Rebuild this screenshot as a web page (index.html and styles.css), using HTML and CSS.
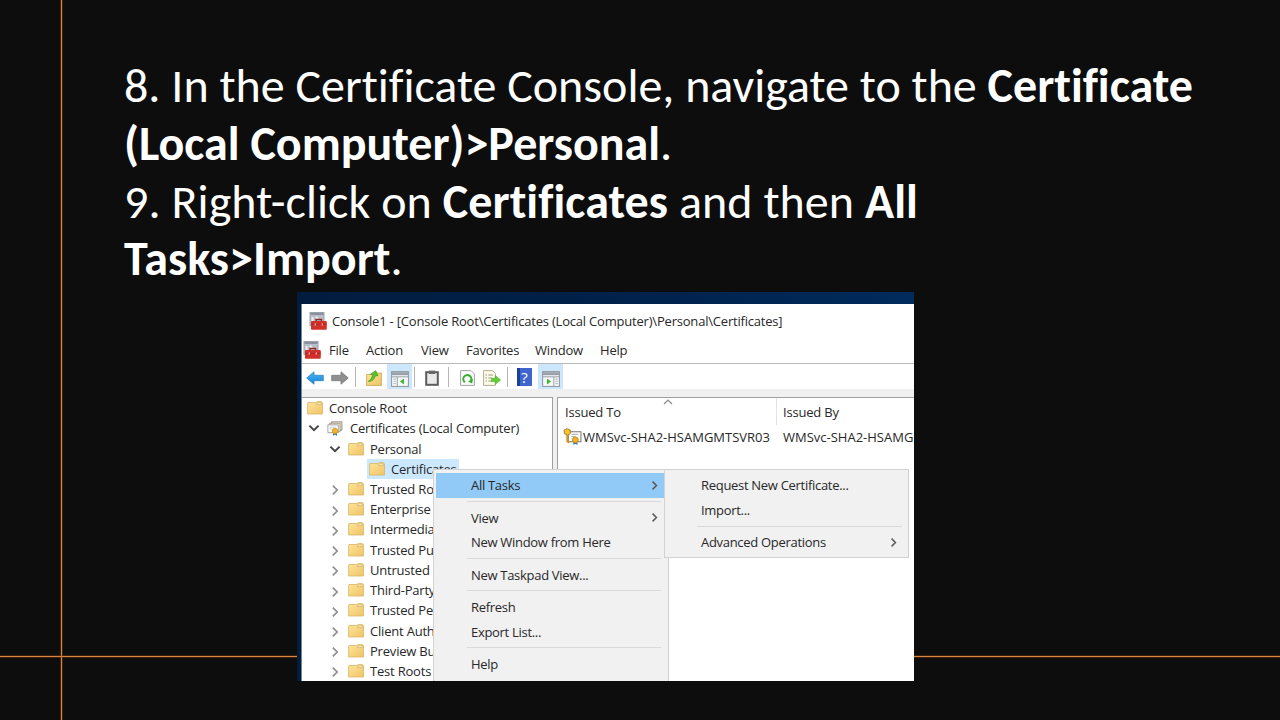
FILE: index.html
```
<!DOCTYPE html>
<html lang="en">
<head>
<meta charset="UTF-8">
<meta name="viewport" content="width=device-width, initial-scale=1.0">
<title>Import a certificate</title>
<link rel="stylesheet" href="styles.css">
</head>
<body>
<!-- shared icons -->
<svg class="sprite" width="0" height="0">
  <defs>
    <linearGradient id="gold" x1="0" y1="0" x2="1" y2="1">
      <stop offset="0" stop-color="#ffe49c"/><stop offset="1" stop-color="#efc465"/>
    </linearGradient>
    <linearGradient id="sky" x1="0" y1="0" x2="0" y2="1">
      <stop offset="0" stop-color="#4fb6f5"/><stop offset="1" stop-color="#1583d6"/>
    </linearGradient>
  </defs>
  <symbol id="folder" viewBox="0 0 16 14">
    <path d="M1 1.5H9L10 .6H14.5L15.5 2V13H.6V2z" fill="url(#gold)" stroke="#d9b565" stroke-width=".8"/>
    <path d="M9.3 3.6L10.6 1.8H14.2V3.6z" fill="#fff3cc" stroke="#c9a85c" stroke-width=".6"/>
  </symbol>
  <symbol id="toolbox" viewBox="0 0 18 18">
    <rect x="1" y=".5" width="14" height="13" fill="#b9bfc9" stroke="#9aa1ac"/>
    <path d="M1.5 2H14.5" stroke="#8a92a0" stroke-width="2"/>
    <path d="M3.5 5V9M7 4.5L9 7.5" stroke="#eceef1" stroke-width="2"/>
    <path d="M7 9.5V7.5H12.5V9.5" fill="none" stroke="#8e2a25" stroke-width="1.4"/>
    <rect x="2" y="9" width="15.8" height="8.7" rx="1" fill="#d2302b"/>
    <path d="M2 12.3H17.8" stroke="#b32622"/>
    <path d="M6.3 11.5V13.5M13.3 11.5V13.5" stroke="#f0b3a8" stroke-width="1.4"/>
  </symbol>
  <symbol id="certs" viewBox="0 0 18 17">
    <path d="M5 1H16.8V10.5H5z" fill="#efe9d8" stroke="#8c8779"/>
    <path d="M3 2.6H14.8V12H3z" fill="#f7f3e8" stroke="#9a9488"/>
    <path d="M1 4.4H12.8V13.2H1z" fill="#fff" stroke="#9a9aa2"/>
    <path d="M3 7H10M3 9H6" stroke="#c4c4c4"/>
    <path d="M7.2 12L6.6 16.8L9 15.3L11.4 16.8L10.8 12z" fill="#2f78c4"/>
    <circle cx="9" cy="11.4" r="3.1" fill="#f0b429" stroke="#c98a12" stroke-width=".7"/>
  </symbol>
  <symbol id="cert" viewBox="0 0 18 16">
    <path d="M5 3.5H17V13H5z" fill="#fff" stroke="#777"/>
    <path d="M8 6H14.5M8 8H12" stroke="#bbb"/>
    <path d="M1 2L3.5 .6L6.8 1.8L7 5L4.6 6.8L1.4 5.4z" fill="#f6c236" stroke="#a77a10" stroke-width=".9"/>
    <path d="M4 6.5V12.5L6 14" fill="none" stroke="#d39a1a" stroke-width="1.8"/>
    <path d="M10.2 11.5L9.6 16L11.7 14.8L13.8 16L13.2 11.5z" fill="#2f78c4"/>
    <circle cx="11.7" cy="11.2" r="2.8" fill="#f0b429" stroke="#b27c0c" stroke-width=".7"/>
  </symbol>
  <symbol id="right" viewBox="0 0 8 12">
    <path d="M1.8 1.6L6.2 6L1.8 10.4" fill="none" stroke="currentColor" stroke-width="1.7"/>
  </symbol>
  <symbol id="down" viewBox="0 0 12 8">
    <path d="M1.4 1.6L6 6.2L10.6 1.6" fill="none" stroke="currentColor" stroke-width="2"/>
  </symbol>
</svg>

<div class="slide">
  <div class="guide guide-v"></div>
  <div class="guide guide-h"></div>

  <div class="steps">
    <p>8. In the Certificate Console, navigate to the <b>Certificate (Local Computer)&gt;Personal</b>.</p>
    <p>9. Right-click on <b>Certificates</b> and then <b>All Tasks&gt;Import</b>.</p>
  </div>

  <div class="desktop">
    <div class="window">
      <div class="titlebar">
        <svg class="app-icon"><use href="#toolbox"/></svg>
        <span>Console1 - [Console Root\Certificates (Local Computer)\Personal\Certificates]</span>
      </div>

      <div class="menubar">
        <svg class="app-icon"><use href="#toolbox"/></svg>
        <span class="m-file">File</span>
        <span class="m-action">Action</span>
        <span class="m-view">View</span>
        <span class="m-fav">Favorites</span>
        <span class="m-window">Window</span>
        <span>Help</span>
      </div>

      <div class="toolbar">
        <svg class="tool arrow" viewBox="0 0 18 14"><path d="M.7 7L8 .8V4.3H17.3V9.7H8V13.2z" fill="url(#sky)" stroke="#2b86c5" stroke-width=".8"/></svg>
        <svg class="tool arrow next" viewBox="0 0 18 14"><path d="M17.3 7L10 .8V4.3H.7V9.7H10V13.2z" fill="#8f8f8f" stroke="#777" stroke-width=".8"/></svg>
        <i class="divider d1"></i>
        <svg class="tool up" viewBox="0 0 16 16"><path d="M.6 4.5H7L8.3 3H15.4V15.4H.6z" fill="url(#gold)" stroke="#c9a14c" stroke-width=".8"/><path d="M2 11.5C5 10 6 7.5 6.6 4.8L4.4 4.2L9.8 .6L12 6L9.6 5.4C8.8 8.8 6 11.8 2 11.5z" fill="#58c32c" stroke="#3b9a1c" stroke-width=".6"/></svg>
        <span class="pressed">
          <svg class="pane-icon" viewBox="0 0 18 16"><rect x=".6" y=".6" width="16.8" height="14.8" fill="#f7f8f9" stroke="#8d959e"/><path d="M1 2.7H17" stroke="#98a0a9" stroke-width="3"/><path d="M1 5.8H17M6.3 6V15" stroke="#98a0a9"/><path d="M2.3 8H5M2.3 10.3H5M2.3 12.6H5" stroke="#b0b7bf"/><path d="M13 7.5V13.5L9 10.5z" fill="#3fb72c"/></svg>
        </span>
        <i class="divider d2"></i>
        <svg class="tool clip" viewBox="0 0 14 16"><rect x="1.2" y="2.2" width="11.6" height="12.6" fill="#e9e9e9" stroke="#5d5d5d" stroke-width="2"/><path d="M4 .6H10V4H4z" fill="#666"/></svg>
        <i class="divider d3"></i>
        <svg class="tool refresh" viewBox="0 0 15 16"><path d="M.6.6H11L14.4 4V15.4H.6z" fill="#fafafa" stroke="#a5a5a5"/><path d="M4.8 12.2A4 4 0 1 1 10.8 11" fill="none" stroke="#35b02c" stroke-width="2"/><path d="M13 8.8L12.2 13.4L8 11.4z" fill="#35b02c"/></svg>
        <svg class="tool export" viewBox="0 0 18 16"><path d="M.6.6H9.5L12.4 3.5V15.4H.6z" fill="#fffbe9" stroke="#b5ad93"/><path d="M2.5 5H4M2.5 8H4M2.5 11H4M5.3 5H10M5.3 8H9M5.3 11H9" stroke="#9a9687"/><path d="M8.5 8.2H12.4V5.5L17.6 10L12.4 14.3V11.6H8.5z" fill="#5fcf35" stroke="#43a822" stroke-width=".5"/></svg>
        <i class="divider d4"></i>
        <span class="help">?</span>
        <span class="pressed last">
          <svg class="pane-icon" viewBox="0 0 18 16"><rect x=".6" y=".6" width="16.8" height="14.8" fill="#f7f8f9" stroke="#8d959e"/><path d="M1 2.7H17" stroke="#98a0a9" stroke-width="3"/><path d="M1 5.8H17M11.8 6V15" stroke="#98a0a9"/><path d="M13.3 8H16M13.3 10.3H16M13.3 12.6H16" stroke="#b0b7bf"/><path d="M5 7.5V13.5L9 10.5z" fill="#3fb72c"/></svg>
        </span>
      </div>

      <div class="panes">
        <div class="tree">
          <div class="node root"><svg class="ico"><use href="#folder"/></svg><span>Console Root</span></div>
          <div class="node l1"><svg class="down"><use href="#down"/></svg><svg class="ico big"><use href="#certs"/></svg><span>Certificates (Local Computer)</span></div>
          <div class="node l2"><svg class="down"><use href="#down"/></svg><svg class="ico"><use href="#folder"/></svg><span>Personal</span></div>
          <div class="node l3"><div class="selected"><svg class="ico"><use href="#folder"/></svg><span>Certificates</span></div></div>
          <div class="node l2"><svg class="right"><use href="#right"/></svg><svg class="ico"><use href="#folder"/></svg><span>Trusted Ro</span></div>
          <div class="node l2"><svg class="right"><use href="#right"/></svg><svg class="ico"><use href="#folder"/></svg><span>Enterprise T</span></div>
          <div class="node l2"><svg class="right"><use href="#right"/></svg><svg class="ico"><use href="#folder"/></svg><span>Intermedia</span></div>
          <div class="node l2"><svg class="right"><use href="#right"/></svg><svg class="ico"><use href="#folder"/></svg><span>Trusted Pu</span></div>
          <div class="node l2"><svg class="right"><use href="#right"/></svg><svg class="ico"><use href="#folder"/></svg><span>Untrusted C</span></div>
          <div class="node l2"><svg class="right"><use href="#right"/></svg><svg class="ico"><use href="#folder"/></svg><span>Third-Party</span></div>
          <div class="node l2"><svg class="right"><use href="#right"/></svg><svg class="ico"><use href="#folder"/></svg><span>Trusted Pe</span></div>
          <div class="node l2"><svg class="right"><use href="#right"/></svg><svg class="ico"><use href="#folder"/></svg><span>Client Auth</span></div>
          <div class="node l2"><svg class="right"><use href="#right"/></svg><svg class="ico"><use href="#folder"/></svg><span>Preview Bu</span></div>
          <div class="node l2"><svg class="right"><use href="#right"/></svg><svg class="ico"><use href="#folder"/></svg><span>Test Roots</span></div>
        </div>

        <div class="list">
          <div class="list-head">
            <div class="col-to">Issued To<svg class="sort" viewBox="0 0 10 6"><path d="M1 5L5 1L9 5" fill="none" stroke="#8a8a8a" stroke-width="1.2"/></svg></div>
            <div class="col-by">Issued By</div>
          </div>
          <div class="list-row">
            <div class="cell-to"><svg class="cert-icon"><use href="#cert"/></svg><span>WMSvc-SHA2-HSAMGMTSVR03</span></div>
            <div class="cell-by">WMSvc-SHA2-HSAMG</div>
          </div>
        </div>
      </div>
    </div>

    <div class="menu context">
      <div class="item active">All Tasks<svg class="right"><use href="#right"/></svg></div>
      <hr>
      <div class="item">View<svg class="right"><use href="#right"/></svg></div>
      <div class="item">New Window from Here</div>
      <hr>
      <div class="item">New Taskpad View...</div>
      <hr>
      <div class="item">Refresh</div>
      <div class="item">Export List...</div>
      <hr>
      <div class="item">Help</div>
    </div>

    <div class="menu submenu">
      <div class="item">Request New Certificate...</div>
      <div class="item">Import...</div>
      <hr>
      <div class="item">Advanced Operations<svg class="right"><use href="#right"/></svg></div>
    </div>
  </div>
</div>
</body>
</html>
```
FILE: styles.css
```
* {
  box-sizing: border-box;
}

body {
  margin: 0;
  background: #0d0d0d;
}

.sprite {
  position: absolute;
}

.slide {
  position: relative;
  width: 1280px;
  height: 720px;
  overflow: hidden;
  background: #0d0d0d;
}

/* orange lines behind the content */
.guide {
  position: absolute;
  background: #d58643;
  box-shadow: 0 0 0 1px rgba(150, 70, 10, 0.35);
}

.guide-v {
  left: 61px;
  top: 0;
  width: 1px;
  height: 720px;
}

.guide-h {
  left: 0;
  top: 656px;
  width: 1280px;
  height: 1px;
}

.steps {
  height: 292px;
  padding: 57px 80px 0 124px;
  color: #fff;
  font-family: Calibri, Carlito, Lato, sans-serif;
  font-size: 48px;
  line-height: 57.8px;
  font-variant-ligatures: none;
}

.steps p {
  margin: 0;
}

.steps p + p {
  max-width: 860px;
  letter-spacing: 0.06px;
}

/* screenshot of the console */
.desktop {
  position: relative;
  width: 617px;
  height: 389px;
  margin-left: 297px;
  padding: 12px 0 0 4px;
  overflow: hidden;
  background: linear-gradient(90deg, #021c3e, #00214a 50%, #002b5c);
  color: #282828;
  font-family: "Segoe UI", "Open Sans", sans-serif;
  font-size: 13px;
  letter-spacing: -0.2px;
  white-space: nowrap;
}

.window {
  display: flex;
  flex-direction: column;
  height: 377px;
  border-left: 1px solid #7b8591;
  background: #fff;
}

.titlebar {
  display: flex;
  align-items: center;
  gap: 5px;
  height: 34px;
  padding-left: 7px;
}

.app-icon {
  width: 18px;
  height: 18px;
  flex: none;
}

.menubar {
  display: flex;
  align-items: center;
  height: 26px;
  padding: 0 0 1px 1px;
  border-bottom: 1px solid #b9b9b9;
}

.menubar .app-icon {
  margin-right: 8px;
}

.m-file {
  width: 37px;
}

.m-action {
  width: 55px;
}

.m-view {
  width: 45px;
}

.m-fav {
  width: 69px;
}

.m-window {
  width: 65px;
}

.toolbar {
  display: flex;
  align-items: center;
  height: 25px;
  padding-left: 4px;
}

.tool {
  flex: none;
  margin-top: 2px;
}

.arrow {
  width: 18px;
  height: 14px;
}

.next {
  margin-left: 7px;
}

.divider {
  width: 1px;
  height: 20px;
  background: #b5b5b5;
}

.d1 {
  margin: 0 10px 0 6px;
}

.up {
  width: 16px;
  height: 16px;
  margin-right: 5px;
}

.pressed {
  display: flex;
  align-items: center;
  justify-content: center;
  width: 25px;
  height: 25px;
  background: #cce6fb;
}

.pane-icon {
  width: 18px;
  height: 16px;
  margin-top: 4px;
}

.d2 {
  margin: 0 10px 0 2px;
}

.clip {
  width: 14px;
  height: 16px;
}

.d3 {
  margin: 0 11px 0 9px;
}

.refresh {
  width: 15px;
  height: 16px;
  margin-right: 8px;
}

.export {
  width: 18px;
  height: 16px;
}

.d4 {
  margin: 0 9px 0 6px;
}

.help {
  width: 15px;
  height: 18px;
  margin-top: 1px;
  background: linear-gradient(90deg, #1d3f9c 20%, #3f66cf 20%);
  color: #fff;
  font-size: 15px;
  line-height: 18px;
  text-align: center;
}

.last {
  margin-left: 6px;
}

.panes {
  display: flex;
  gap: 4px;
  flex: 1;
  min-height: 0;
  padding-top: 8px;
  background: #f0f0f0;
}

.tree {
  width: 251px;
  overflow: hidden;
  border-top: 1px solid #a0a0a0;
  border-right: 1px solid #a0a0a0;
  background: #fff;
}

.node {
  display: flex;
  align-items: center;
  height: 20.23px;
}

.node svg {
  flex: none;
}

.ico {
  width: 16px;
  height: 14px;
  margin-right: 6px;
}

.big {
  height: 17px;
}

.down {
  width: 12px;
  height: 8px;
  margin-right: 6px;
  color: #454545;
}

.right {
  width: 8px;
  height: 12px;
  color: #8f8f8f;
}

.node .right {
  margin: 3px 9px 0 2px;
}

.root {
  padding-left: 5px;
}

.l1 {
  padding-left: 6px;
}

.l1 .ico {
  margin: 0 7px 0 1px;
}

.l2 {
  padding-left: 27px;
}

.l2 .down {
  margin-right: 7px;
}

.l3 {
  padding-left: 65px;
}

.selected {
  display: flex;
  align-items: center;
  width: 92px;
  height: 20px;
  padding-left: 2px;
  background: #cce8ff;
}

.list {
  flex: 1;
  min-width: 0;
  overflow: hidden;
  border-top: 1px solid #a0a0a0;
  border-left: 1px solid #a0a0a0;
  background: #fff;
}

.list-head {
  display: flex;
  height: 27px;
  line-height: 28px;
}

.col-to {
  position: relative;
  width: 219px;
  padding-left: 7px;
  border-right: 1px solid #e2e2e2;
}

/* sort arrow sits on the top edge of the column */
.sort {
  position: absolute;
  top: 1px;
  left: 105px;
  width: 10px;
  height: 6px;
}

.col-by {
  padding-left: 6px;
}

.list-row {
  display: flex;
  align-items: center;
  height: 23px;
  letter-spacing: 0;
}

.cell-to {
  display: flex;
  align-items: center;
  gap: 1px;
  flex: none;
  width: 225px;
  padding-left: 5px;
}

.cert-icon {
  width: 19px;
  height: 17px;
  flex: none;
}

.menu {
  position: absolute;
  border: 1px solid #d2d2d2;
  background: #f1f1f1;
  letter-spacing: -0.3px;
}

.item {
  display: flex;
  align-items: center;
  justify-content: space-between;
  height: 24.8px;
  padding: 0 6px 0 35px;
}

.item .right {
  width: 7px;
  height: 11px;
  color: #5a5a5a;
}

.menu hr {
  height: 1px;
  margin: 3.2px 3px 3.2px 31px;
  border: 0;
  background: #d9d9d9;
}

.context {
  left: 136px;
  top: 177px;
  width: 236px;
  height: 240px;
  padding: 3px 4px 3px 2px;
}

.active {
  background: #91c9f7;
}

.submenu {
  left: 367px;
  top: 177px;
  width: 245px;
  height: 89px;
  padding: 3px 3px 3px 1px;
}

.submenu .item {
  padding-right: 8px;
}
```
